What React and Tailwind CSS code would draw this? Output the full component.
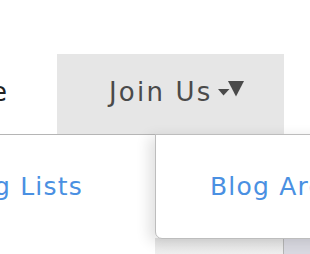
export default function App() {
  return (
    <div className="relative w-[310px] h-[254px] overflow-hidden bg-white font-['DejaVu_Sans',sans-serif]">
      {/* NAV ROW */}
      <div className="pt-[54px] flex">
        <div className="w-[57px] h-[81px] flex items-center justify-end overflow-hidden pr-[49px] pb-[6px]">
          <span className="shrink-0 text-[26px] text-[#222] leading-none tracking-[1px]">Home</span>
        </div>
        <div className="w-[227px] h-[81px] bg-[#e6e6e6] flex items-center pl-[52px] pb-[6px]">
          <span className="text-[26px] text-[#4a4a4a] leading-none tracking-[2.2px]">Join Us</span>
          <svg width="28" height="18" viewBox="0 0 28 18" className="ml-[4px] mb-[3px]">
            <path d="M1 8 L12.5 8 L6.5 14.5 Z" fill="#4a4a4a" />
            <path d="M11 0 L27 0 L19 15.5 Z" fill="#4a4a4a" />
          </svg>
        </div>
      </div>

      {/* DROPDOWN 1 */}
      <div className="absolute left-0 top-[134px] w-[284px] h-[120px] bg-white border-t border-r border-[#b5b5b5]">
        <div className="absolute bottom-0 left-[155px] right-0 h-[16px] bg-gradient-to-b from-[#e2e2e2] to-[#efefef]" />
        <div className="pt-[39px] -ml-[49px] text-[25px] text-[#4a90e2] leading-none tracking-[1.2px] whitespace-nowrap">Blog Lists</div>
      </div>
      <div className="absolute left-[284px] top-[238px] w-[26px] h-[16px] bg-[#d9d9e1]" />

      {/* DROPDOWN 2 */}
      <div className="absolute left-[155px] top-[134px] w-[200px] h-[105px] bg-white border border-[#bdbdbd] rounded-bl-[7px] shadow-[-6px_3px_14px_rgba(0,0,0,0.12)]">
        <div className="pt-[39px] pl-[54px] text-[25px] text-[#4a90e2] leading-none tracking-[1.2px] whitespace-nowrap">Blog Archive</div>
      </div>
    </div>
  )
}
